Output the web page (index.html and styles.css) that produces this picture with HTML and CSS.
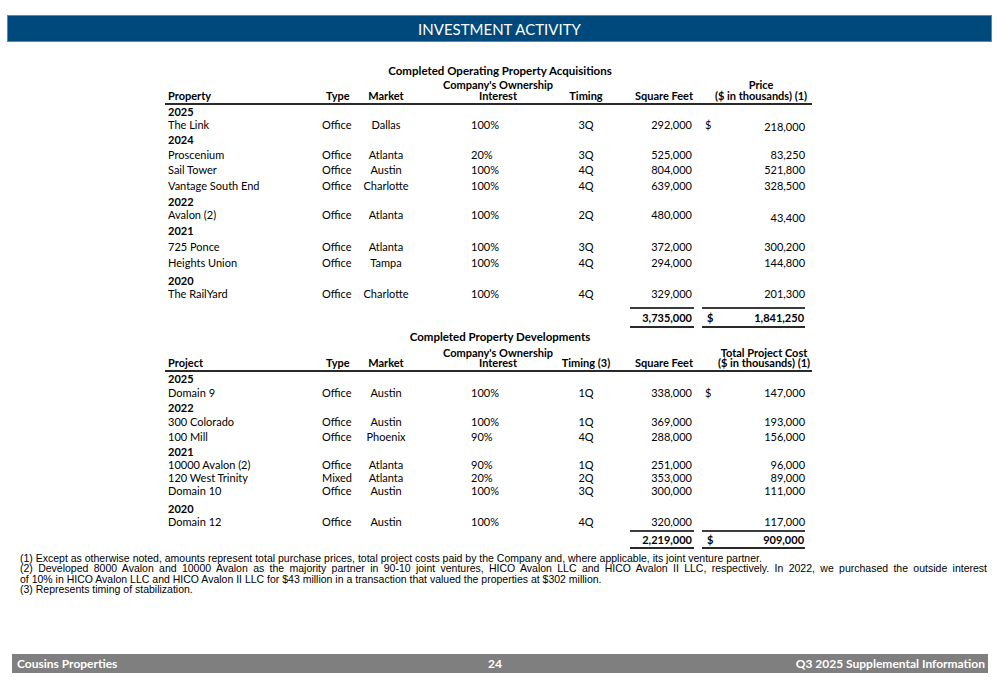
FILE: index.html
```html
<!DOCTYPE html>
<html lang="en">
<head>
<meta charset="utf-8">
<title>Investment Activity</title>
<link rel="stylesheet" href="styles.css">
</head>
<body>
<div class="page">
  <header class="banner"><h1>INVESTMENT ACTIVITY</h1></header>

  <section class="sec">
    <h2 class="sec-title t1">Completed Operating Property Acquisitions</h2>
    <table class="grid g1">
      <colgroup>
        <col class="w1"><col class="w2"><col class="w3"><col class="w4"><col class="w5"><col class="w6"><col class="w7"><col class="w8">
      </colgroup>
      <thead>
        <tr>
          <th class="h-name">Property</th>
          <th class="h-type">Type</th>
          <th class="h-mkt">Market</th>
          <th class="h-int">Company's Ownership<br>Interest</th>
          <th class="h-tim">Timing</th>
          <th class="h-sf">Square Feet</th>
          <th class="h-amt" colspan="2">Price<br>($ in thousands) (1)</th>
        </tr>
      </thead>
      <tbody>
        <tr class="p0 yr"><td colspan="8">2025</td></tr>
        <tr class="p0"><td class="c-name">The Link</td><td class="c-type">Office</td><td class="c-mkt">Dallas</td><td class="c-int">100%</td><td class="c-tim">3Q</td><td class="c-sf">292,000</td><td class="c-dol">$</td><td class="c-amt dn2">218,000</td></tr>
        <tr class="p0 yr"><td colspan="8">2024</td></tr>
        <tr class="p2"><td class="c-name">Proscenium</td><td class="c-type">Office</td><td class="c-mkt">Atlanta</td><td class="c-int">20%</td><td class="c-tim">3Q</td><td class="c-sf">525,000</td><td class="c-dol"></td><td class="c-amt">83,250</td></tr>
        <tr class="p2"><td class="c-name">Sail Tower</td><td class="c-type">Office</td><td class="c-mkt">Austin</td><td class="c-int">100%</td><td class="c-tim">4Q</td><td class="c-sf">804,000</td><td class="c-dol"></td><td class="c-amt">521,800</td></tr>
        <tr class="p3"><td class="c-name">Vantage South End</td><td class="c-type">Office</td><td class="c-mkt">Charlotte</td><td class="c-int">100%</td><td class="c-tim">4Q</td><td class="c-sf">639,000</td><td class="c-dol"></td><td class="c-amt">328,500</td></tr>
        <tr class="p3 yr"><td colspan="8">2022</td></tr>
        <tr class="p0"><td class="c-name">Avalon (2)</td><td class="c-type">Office</td><td class="c-mkt">Atlanta</td><td class="c-int">100%</td><td class="c-tim">2Q</td><td class="c-sf">480,000</td><td class="c-dol"></td><td class="c-amt dn3">43,400</td></tr>
        <tr class="p0 yr"><td colspan="8">2021</td></tr>
        <tr class="p3"><td class="c-name">725 Ponce</td><td class="c-type">Office</td><td class="c-mkt">Atlanta</td><td class="c-int">100%</td><td class="c-tim">3Q</td><td class="c-sf">372,000</td><td class="c-dol"></td><td class="c-amt">300,200</td></tr>
        <tr class="p3"><td class="c-name">Heights Union</td><td class="c-type">Office</td><td class="c-mkt">Tampa</td><td class="c-int">100%</td><td class="c-tim">4Q</td><td class="c-sf">294,000</td><td class="c-dol"></td><td class="c-amt">144,800</td></tr>
        <tr class="p5 yr"><td colspan="8">2020</td></tr>
        <tr class="p0"><td class="c-name">The RailYard</td><td class="c-type">Office</td><td class="c-mkt">Charlotte</td><td class="c-int">100%</td><td class="c-tim">4Q</td><td class="c-sf">329,000</td><td class="c-dol"></td><td class="c-amt">201,300</td></tr>
        <tr class="tot tot1">
          <td colspan="5"></td>
          <td class="t-sf"><div class="totbox">3,735,000</div></td>
          <td class="t-amt" colspan="2"><div class="totbox split"><span>$</span><span>1,841,250</span></div></td>
        </tr>
      </tbody>
    </table>
  </section>

  <section class="sec">
    <h2 class="sec-title t2">Completed Property Developments</h2>
    <table class="grid g2">
      <colgroup>
        <col class="w1"><col class="w2"><col class="w3"><col class="w4"><col class="w5"><col class="w6"><col class="w7"><col class="w8">
      </colgroup>
      <thead>
        <tr>
          <th class="h-name">Project</th>
          <th class="h-type">Type</th>
          <th class="h-mkt">Market</th>
          <th class="h-int">Company's Ownership<br>Interest</th>
          <th class="h-tim">Timing (3)</th>
          <th class="h-sf">Square Feet</th>
          <th class="h-amt h-amt2" colspan="2">Total Project Cost<br>($ in thousands) (1)</th>
        </tr>
      </thead>
      <tbody>
        <tr class="p0 yr"><td colspan="8">2025</td></tr>
        <tr class="p1"><td class="c-name">Domain 9</td><td class="c-type">Office</td><td class="c-mkt">Austin</td><td class="c-int">100%</td><td class="c-tim">1Q</td><td class="c-sf">338,000</td><td class="c-dol">$</td><td class="c-amt">147,000</td></tr>
        <tr class="p2 yr"><td colspan="8">2022</td></tr>
        <tr class="p1"><td class="c-name">300 Colorado</td><td class="c-type">Office</td><td class="c-mkt">Austin</td><td class="c-int">100%</td><td class="c-tim">1Q</td><td class="c-sf">369,000</td><td class="c-dol"></td><td class="c-amt">193,000</td></tr>
        <tr class="p2"><td class="c-name">100 Mill</td><td class="c-type">Office</td><td class="c-mkt">Phoenix</td><td class="c-int">90%</td><td class="c-tim">4Q</td><td class="c-sf">288,000</td><td class="c-dol"></td><td class="c-amt">156,000</td></tr>
        <tr class="p2 yr"><td colspan="8">2021</td></tr>
        <tr class="p0"><td class="c-name">10000 Avalon (2)</td><td class="c-type">Office</td><td class="c-mkt">Atlanta</td><td class="c-int">90%</td><td class="c-tim">1Q</td><td class="c-sf">251,000</td><td class="c-dol"></td><td class="c-amt">96,000</td></tr>
        <tr class="p0"><td class="c-name">120 West Trinity</td><td class="c-type">Mixed</td><td class="c-mkt">Atlanta</td><td class="c-int">20%</td><td class="c-tim">2Q</td><td class="c-sf">353,000</td><td class="c-dol"></td><td class="c-amt">89,000</td></tr>
        <tr class="p0"><td class="c-name">Domain 10</td><td class="c-type">Office</td><td class="c-mkt">Austin</td><td class="c-int">100%</td><td class="c-tim">3Q</td><td class="c-sf">300,000</td><td class="c-dol"></td><td class="c-amt">111,000</td></tr>
        <tr class="p5 yr"><td colspan="8">2020</td></tr>
        <tr class="p0"><td class="c-name">Domain 12</td><td class="c-type">Office</td><td class="c-mkt">Austin</td><td class="c-int">100%</td><td class="c-tim">4Q</td><td class="c-sf">320,000</td><td class="c-dol"></td><td class="c-amt">117,000</td></tr>
        <tr class="tot tot2">
          <td colspan="5"></td>
          <td class="t-sf"><div class="totbox">2,219,000</div></td>
          <td class="t-amt" colspan="2"><div class="totbox split"><span>$</span><span>909,000</span></div></td>
        </tr>
      </tbody>
    </table>
  </section>

  <div class="notes">
    <div class="note">(1) Except as otherwise noted, amounts represent total purchase prices, total project costs paid by the Company and, where applicable, its joint venture partner.</div>
    <div class="note note-just">(2) Developed 8000 Avalon and 10000 Avalon as the majority partner in 90-10 joint ventures, HICO Avalon LLC and HICO Avalon II LLC, respectively. In 2022, we purchased the outside interest</div>
    <div class="note">of 10% in HICO Avalon LLC and HICO Avalon II LLC for $43 million in a transaction that valued the properties at $302 million.</div>
    <div class="note">(3) Represents timing of stabilization.</div>
  </div>

  <footer class="foot">
    <span class="f-left">Cousins Properties</span>
    <span class="f-mid">24</span>
    <span class="f-right">Q3 2025 Supplemental Information</span>
  </footer>
</div>
</body>
</html>
```

FILE: styles.css
```css
* { box-sizing: border-box; }

html, body {
  margin: 0;
  padding: 0;
  background: #ffffff;
}

body {
  font-family: Lato, "Open Sans", "Liberation Sans", sans-serif;
  color: #000;
}

.page {
  width: 1000px;
  height: 685px;
  display: flex;
  flex-direction: column;
  overflow: hidden;
}

/* top banner */
.banner {
  margin: 15px 8px 0 7px;
  height: 27px;
  background: #00497c;
  border: 1px solid #5b87ad;
  display: flex;
  align-items: center;
  justify-content: center;
}

.banner h1 {
  margin: 0;
  font-size: 15px;
  font-weight: 400;
  color: #fff;
  line-height: 16px;
}

/* sections */
.sec-title {
  margin: 0;
  text-align: center;
  font-size: 11.5px;
  font-weight: 700;
  line-height: 14px;
}

.t1 { margin-top: 22px; }
.t2 { margin-top: 2px; }

.grid {
  border-collapse: separate;
  border-spacing: 0;
  table-layout: fixed;
  width: 647px;
  margin-left: 165px;
}

.g1 { margin-top: 2px; }
.g2 { margin-top: 4px; }

.w1 { width: 145px; }
.w2 { width: 50px; }
.w3 { width: 52px; }
.w4 { width: 144px; }
.w5 { width: 60px; }
.w6 { width: 78px; }
.w7 { width: 22px; }
.w8 { width: 96px; }

th {
  font-size: 11px;
  font-weight: 700;
  line-height: 10.5px;
  vertical-align: bottom;
  padding: 0 0 1.5px;
  border-bottom: 2px solid #2a2a2a;
  white-space: nowrap;
}

.h-name { text-align: left; padding-left: 3px; }
.h-type { text-align: left; padding-left: 16px; }
.h-mkt { text-align: center; }
.h-int { text-align: center; padding-left: 28px; }
.h-tim { text-align: center; }
.h-sf { text-align: right; padding-right: 1px; }
.h-amt { text-align: center; padding-left: 16px; }
.h-amt2 { padding-left: 22px; }

td {
  font-size: 11px;
  line-height: 13px;
  padding: 0;
  white-space: nowrap;
  vertical-align: top;
}

tr.p0 > td { padding-top: 0; }
tr.p1 > td { padding-top: 1px; }
tr.p2 > td { padding-top: 2px; }
tr.p3 > td { padding-top: 3px; }
tr.p5 > td { padding-top: 5px; }

tr.p0 > td.dn2 { padding-top: 2px; }
tr.p0 > td.dn3 { padding-top: 3px; }

tr.yr > td {
  font-weight: 700;
  padding-left: 3px;
}

.c-name { padding-left: 3px; }
.c-type { padding-left: 12px; }
.c-mkt { text-align: center; }
.c-int { padding-left: 59px; }
.c-tim { text-align: center; }
.c-sf { text-align: right; padding-right: 2px; }
.c-dol { padding-left: 11px; }
.c-amt { text-align: right; padding-right: 7px; }

/* totals */
tr.tot1 > td { padding-top: 7px; }
tr.tot2 > td { padding-top: 2px; }

.t-sf { padding-left: 14px; }
.t-amt { padding-left: 8px; padding-right: 7px; }

.totbox {
  border-top: 2px solid #3c3c3c;
  border-bottom: 2px solid #2a2a2a;
  font-weight: 700;
  padding: 2px 2px 2px 0;
  text-align: right;
}

.tot2 .totbox { padding-top: 1px; padding-bottom: 1px; }

.split {
  display: flex;
  justify-content: space-between;
  padding-left: 5px;
  padding-right: 1px;
}

/* footnotes */
.notes {
  margin: 4px 0 0 20px;
  font-family: "Liberation Sans", Arial, sans-serif;
  font-size: 10.5px;
  line-height: 10.4px;
  color: #000;
}

.note { white-space: nowrap; }

.note-just {
  width: 967px;
  white-space: normal;
  text-align: justify;
  text-align-last: justify;
}

/* footer */
.foot {
  margin: auto 12px 12px 12px;
  height: 19px;
  background: #7f7f7f;
  color: #fff;
  display: grid;
  grid-template-columns: 1fr auto 1fr;
  align-items: center;
  padding: 0 3px 0 5px;
  font-family: Lato, "Liberation Sans", sans-serif;
  font-weight: 700;
  font-size: 12px;
}

.f-left { justify-self: start; }
.f-mid { justify-self: center; padding-right: 12px; }
.f-right { justify-self: end; }
```
